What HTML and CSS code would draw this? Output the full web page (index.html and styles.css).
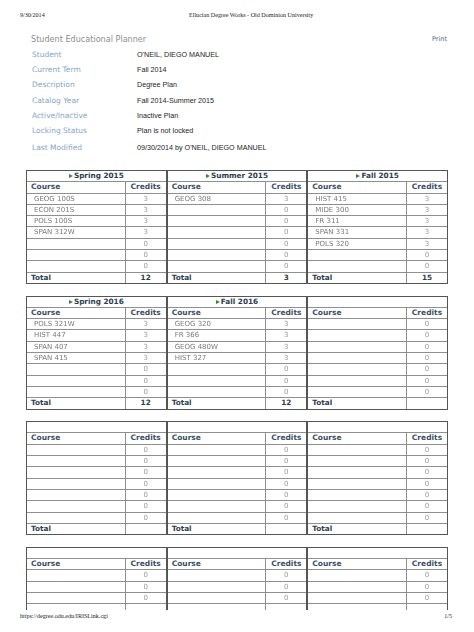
FILE: index.html
```html
<!DOCTYPE html>
<html>
<head>
<meta charset="utf-8">
<title>Ellucian Degree Works - Old Dominion University</title>
<link rel="stylesheet" href="styles.css">
</head>
<body>
<div class="top"><span>9/30/2014</span><span>Ellucian Degree Works - Old Dominion University</span></div>
<div class="titlebar"><span class="title">Student Educational Planner</span><span class="print">Print</span></div>
<div class="info">
  <div class="lbl">Student</div><div class="val">O'NEIL, DIEGO MANUEL</div>
  <div class="lbl">Current Term</div><div class="val">Fall 2014</div>
  <div class="lbl">Description</div><div class="val">Degree Plan</div>
  <div class="lbl">Catalog Year</div><div class="val">Fall 2014-Summer 2015</div>
  <div class="lbl">Active/Inactive</div><div class="val">Inactive Plan</div>
  <div class="lbl">Locking Status</div><div class="val">Plan is not locked</div>
  <div class="lbl">Last Modified</div><div class="val">09/30/2014 by O'NEIL, DIEGO MANUEL</div>
</div>

<div class="groups">
  <div class="group">
    <div class="sem">
      <div class="t"><i class="tri"></i>Spring 2015</div>
      <div class="h">Course</div><div class="h hn">Credits</div>
      <div class="c">GEOG 100S</div><div class="n">3</div>
      <div class="c">ECON 201S</div><div class="n">3</div>
      <div class="c">POLS 100S</div><div class="n">3</div>
      <div class="c">SPAN 312W</div><div class="n">3</div>
      <div class="c"></div><div class="n">0</div>
      <div class="c"></div><div class="n">0</div>
      <div class="c"></div><div class="n">0</div>
      <div class="tot">Total</div><div class="tn">12</div>
    </div>
    <div class="sem">
      <div class="t"><i class="tri"></i>Summer 2015</div>
      <div class="h">Course</div><div class="h hn">Credits</div>
      <div class="c">GEOG 308</div><div class="n">3</div>
      <div class="c"></div><div class="n">0</div>
      <div class="c"></div><div class="n">0</div>
      <div class="c"></div><div class="n">0</div>
      <div class="c"></div><div class="n">0</div>
      <div class="c"></div><div class="n">0</div>
      <div class="c"></div><div class="n">0</div>
      <div class="tot">Total</div><div class="tn">3</div>
    </div>
    <div class="sem">
      <div class="t"><i class="tri"></i>Fall 2015</div>
      <div class="h">Course</div><div class="h hn">Credits</div>
      <div class="c">HIST 415</div><div class="n">3</div>
      <div class="c">MIDE 300</div><div class="n">3</div>
      <div class="c">FR 311</div><div class="n">3</div>
      <div class="c">SPAN 331</div><div class="n">3</div>
      <div class="c">POLS 320</div><div class="n">3</div>
      <div class="c"></div><div class="n">0</div>
      <div class="c"></div><div class="n">0</div>
      <div class="tot">Total</div><div class="tn">15</div>
    </div>
  </div>

  <div class="group">
    <div class="sem">
      <div class="t"><i class="tri"></i>Spring 2016</div>
      <div class="h">Course</div><div class="h hn">Credits</div>
      <div class="c">POLS 321W</div><div class="n">3</div>
      <div class="c">HIST 447</div><div class="n">3</div>
      <div class="c">SPAN 407</div><div class="n">3</div>
      <div class="c">SPAN 415</div><div class="n">3</div>
      <div class="c"></div><div class="n">0</div>
      <div class="c"></div><div class="n">0</div>
      <div class="c"></div><div class="n">0</div>
      <div class="tot">Total</div><div class="tn">12</div>
    </div>
    <div class="sem">
      <div class="t"><i class="tri"></i>Fall 2016</div>
      <div class="h">Course</div><div class="h hn">Credits</div>
      <div class="c">GEOG 320</div><div class="n">3</div>
      <div class="c">FR 366</div><div class="n">3</div>
      <div class="c">GEOG 480W</div><div class="n">3</div>
      <div class="c">HIST 327</div><div class="n">3</div>
      <div class="c"></div><div class="n">0</div>
      <div class="c"></div><div class="n">0</div>
      <div class="c"></div><div class="n">0</div>
      <div class="tot">Total</div><div class="tn">12</div>
    </div>
    <div class="sem">
      <div class="t"></div>
      <div class="h">Course</div><div class="h hn">Credits</div>
      <div class="c"></div><div class="n">0</div>
      <div class="c"></div><div class="n">0</div>
      <div class="c"></div><div class="n">0</div>
      <div class="c"></div><div class="n">0</div>
      <div class="c"></div><div class="n">0</div>
      <div class="c"></div><div class="n">0</div>
      <div class="c"></div><div class="n">0</div>
      <div class="tot">Total</div><div class="tn"></div>
    </div>
  </div>

  <div class="group">
    <div class="sem">
      <div class="t"></div>
      <div class="h">Course</div><div class="h hn">Credits</div>
      <div class="c"></div><div class="n">0</div>
      <div class="c"></div><div class="n">0</div>
      <div class="c"></div><div class="n">0</div>
      <div class="c"></div><div class="n">0</div>
      <div class="c"></div><div class="n">0</div>
      <div class="c"></div><div class="n">0</div>
      <div class="c"></div><div class="n">0</div>
      <div class="tot">Total</div><div class="tn"></div>
    </div>
    <div class="sem">
      <div class="t"></div>
      <div class="h">Course</div><div class="h hn">Credits</div>
      <div class="c"></div><div class="n">0</div>
      <div class="c"></div><div class="n">0</div>
      <div class="c"></div><div class="n">0</div>
      <div class="c"></div><div class="n">0</div>
      <div class="c"></div><div class="n">0</div>
      <div class="c"></div><div class="n">0</div>
      <div class="c"></div><div class="n">0</div>
      <div class="tot">Total</div><div class="tn"></div>
    </div>
    <div class="sem">
      <div class="t"></div>
      <div class="h">Course</div><div class="h hn">Credits</div>
      <div class="c"></div><div class="n">0</div>
      <div class="c"></div><div class="n">0</div>
      <div class="c"></div><div class="n">0</div>
      <div class="c"></div><div class="n">0</div>
      <div class="c"></div><div class="n">0</div>
      <div class="c"></div><div class="n">0</div>
      <div class="c"></div><div class="n">0</div>
      <div class="tot">Total</div><div class="tn"></div>
    </div>
  </div>

  <div class="clip">
    <div class="group">
      <div class="sem">
        <div class="t"></div>
        <div class="h">Course</div><div class="h hn">Credits</div>
        <div class="c"></div><div class="n">0</div>
        <div class="c"></div><div class="n">0</div>
        <div class="c"></div><div class="n">0</div>
        <div class="c"></div><div class="n"></div>
      </div>
      <div class="sem">
        <div class="t"></div>
        <div class="h">Course</div><div class="h hn">Credits</div>
        <div class="c"></div><div class="n">0</div>
        <div class="c"></div><div class="n">0</div>
        <div class="c"></div><div class="n">0</div>
        <div class="c"></div><div class="n"></div>
      </div>
      <div class="sem">
        <div class="t"></div>
        <div class="h">Course</div><div class="h hn">Credits</div>
        <div class="c"></div><div class="n">0</div>
        <div class="c"></div><div class="n">0</div>
        <div class="c"></div><div class="n">0</div>
        <div class="c"></div><div class="n"></div>
      </div>
    </div>
  </div>
</div>

<div class="foot"><span>https://degree.odu.edu/IRISLink.cgi</span><span>1/5</span></div>
</body>
</html>
```

FILE: styles.css
```css
html, body {
  margin: 0;
  padding: 0;
  background: #fff;
}
body {
  font-family: "DejaVu Sans", Verdana, sans-serif;
  width: 474px;
  height: 632px;
  overflow: hidden;
}
.top {
  display: grid;
  grid-template-columns: 169px auto;
  align-items: center;
  height: 30px;
  padding-left: 20px;
  font-family: "Liberation Serif", serif;
  font-size: 6.1px;
  color: #222;
}
.titlebar {
  display: flex;
  justify-content: space-between;
  align-items: center;
  height: 17px;
  padding: 0 27px 0 31px;
}
.title {
  font-size: 8.1px;
  color: #8e8e8e;
}
.print {
  font-size: 6.5px;
  color: #4e6684;
}
.info {
  display: grid;
  grid-template-columns: 105px 1fr;
  grid-template-rows: repeat(6, 15.2px) 17px;
  align-items: end;
  padding-left: 32px;
}
.info > div {
  line-height: 15.2px;
  white-space: nowrap;
}
.lbl {
  font-size: 7.5px;
  color: #86a5c9;
}
.val {
  font-family: "Liberation Sans", Arial, sans-serif;
  font-size: 7.2px;
  color: #1e1e1e;
}
.groups {
  display: flex;
  flex-direction: column;
  gap: 11.67px;
  margin-top: 14.8px;
  padding: 0 26px;
}
.group {
  display: grid;
  grid-template-columns: repeat(3, 1fr);
}
.clip {
  height: 63px;
  overflow: hidden;
}
.sem {
  display: grid;
  grid-template-columns: 1fr 40px;
  grid-auto-rows: 10.3px;
  gap: 1px;
  background: #8f8f8f;
  border: 1px solid #555;
}
.sem > div {
  background: #fff;
  font-size: 7px;
  line-height: 10.3px;
  white-space: nowrap;
  overflow: hidden;
}
.sem > .t {
  grid-column: span 2;
  text-align: center;
  font-weight: bold;
  font-size: 7.3px;
  color: #2c3e52;
}
.tri {
  display: inline-block;
  width: 0;
  height: 0;
  border-left: 4px solid #2f8a3c;
  border-top: 2.5px solid transparent;
  border-bottom: 2.5px solid transparent;
  margin-right: 1px;
  vertical-align: -0.5px;
}
.sem > .h {
  font-weight: bold;
  font-size: 7.5px;
  color: #3d5068;
  padding-left: 4px;
}
.sem > .hn {
  text-align: center;
  padding-left: 0;
}
.sem > .c {
  padding-left: 7px;
  color: #7a7a7a;
  filter: grayscale(1);
}
.sem > .n {
  text-align: center;
  color: #9a9a9a;
  filter: grayscale(1);
}
.sem > .tot {
  font-weight: bold;
  font-size: 7.3px;
  color: #2c3e52;
  padding-left: 4px;
}
.sem > .tn {
  text-align: center;
  font-weight: bold;
  font-size: 7.3px;
  color: #2c3e52;
}
.foot {
  display: flex;
  justify-content: space-between;
  height: 12px;
  line-height: 12px;
  padding: 0 22px 0 20px;
  font-family: "Liberation Serif", serif;
  font-size: 6.1px;
  color: #222;
}
```
